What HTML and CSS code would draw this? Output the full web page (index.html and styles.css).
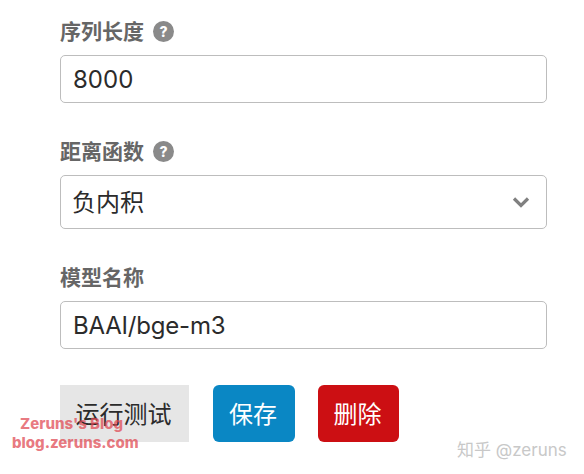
FILE: index.html
```html
<!DOCTYPE html>
<html lang="zh-CN">
<head>
<meta charset="utf-8">
<title>设置</title>
<link rel="stylesheet" href="styles.css">
</head>
<body>
<form class="form">
  <div class="field field-first">
    <div class="label-row"><label class="label">序列长度</label><span class="help">?</span></div>
    <div class="control input">8000</div>
  </div>
  <div class="field">
    <div class="label-row"><label class="label">距离函数</label><span class="help">?</span></div>
    <div class="control select">负内积
      <svg class="chevron" width="18" height="12" viewBox="0 0 18 12"><path d="M2 2.5 9 9.5 16 2.5" fill="none" stroke="#808080" stroke-width="3.2"/></svg>
    </div>
  </div>
  <div class="field">
    <div class="label-row"><label class="label">模型名称</label></div>
    <div class="control input input-model">BAAI/bge-m3</div>
  </div>
  <div class="actions">
    <button type="button" class="btn btn-test">运行测试</button>
    <button type="button" class="btn btn-save">保存</button>
    <button type="button" class="btn btn-delete">删除</button>
  </div>
</form>
<div class="wm-blog">Zeruns's Blog<br>blog.zeruns.com</div>
<div class="wm-zhihu">知乎 @zeruns</div>
</body>
</html>
```
FILE: styles.css
```css
html, body { margin: 0; padding: 0; background: #fff; }
body {
  width: 584px;
  height: 474px;
  position: relative;
  overflow: hidden;
  font-family: Inter, "Noto Sans CJK SC", sans-serif;
  color: #2b2b2b;
}
.form { padding: 0 37px 0 60px; }
.field { margin-top: 33px; }
.field-first { margin-top: 0; padding-top: 16px; }
.label-row {
  display: flex;
  align-items: center;
  gap: 9px;
  height: 31px;
  margin-bottom: 8px;
}
.label {
  font-size: 21px;
  font-weight: 700;
  color: #666;
  line-height: 31px;
}
.help {
  width: 21px;
  height: 21px;
  border-radius: 50%;
  background: #8a8a8a;
  color: #fff;
  font-size: 14px;
  font-weight: 800;
  line-height: 21px;
  text-align: center;
}
.control {
  box-sizing: border-box;
  border: 1px solid #bdbdbd;
  border-radius: 5px;
  background: #fff;
  padding: 0 12px;
  font-size: 24px;
  display: flex;
  align-items: center;
}
.input { height: 48px; }
.input-model { letter-spacing: -0.2px; }
.select {
  height: 54px;
  justify-content: space-between;
  padding: 0 16px 3px 11px;
}
.chevron { margin-top: 3px; }
.actions {
  display: flex;
  margin-top: 36px;
  gap: 24px;
}
.btn {
  height: 57px;
  border: 0;
  padding: 0 2px 2px 0;
  font-family: inherit;
  font-size: 24px;
  color: #fff;
  border-radius: 6px;
}
.btn-test { width: 129px; background: #e6e6e6; color: #2b2b2b; border-radius: 0; }
.btn-save { width: 82px; background: #0a87c4; }
.btn-delete { width: 81px; background: #cc0f13; margin-left: -1px; }
.wm-blog {
  position: absolute;
  left: 12px;
  top: 414px;
  text-indent: 8px;
  font-size: 15px;
  line-height: 19px;
  font-weight: 800;
  color: rgba(224, 70, 80, 0.72);
  white-space: nowrap;
}
.wm-zhihu {
  position: absolute;
  left: 457px;
  top: 438px;
  font-size: 17px;
  line-height: 24px;
  color: #c8c8c8;
  white-space: nowrap;
}
```
